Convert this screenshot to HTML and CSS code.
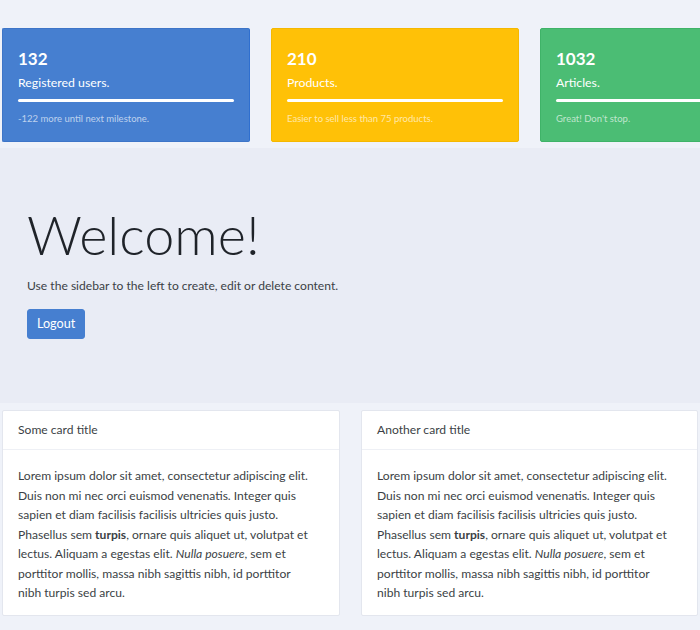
FILE: index.html
```html
<!DOCTYPE html>
<html lang="en">
<head>
<meta charset="utf-8">
<title>Dashboard</title>
<link rel="stylesheet" href="styles.css">
</head>
<body>
<div class="page">
  <div class="stats">
    <div class="stat stat-blue">
      <div class="stat-num">132</div>
      <div class="stat-label">Registered users.</div>
      <div class="stat-bar"></div>
      <div class="stat-note">-122 more until next milestone.</div>
    </div>
    <div class="stat stat-yellow">
      <div class="stat-num">210</div>
      <div class="stat-label">Products.</div>
      <div class="stat-bar"></div>
      <div class="stat-note">Easier to sell less than 75 products.</div>
    </div>
    <div class="stat stat-green">
      <div class="stat-num">1032</div>
      <div class="stat-label">Articles.</div>
      <div class="stat-bar"></div>
      <div class="stat-note">Great! Don't stop.</div>
    </div>
  </div>

  <div class="jumbo">
    <h1 class="jumbo-title">Welcome!</h1>
    <p class="jumbo-lead">Use the sidebar to the left to create, edit or delete content.</p>
    <button class="btn">Logout</button>
  </div>

  <div class="cards">
    <div class="card card-left">
      <div class="card-header">Some card title</div>
      <div class="card-body">Lorem ipsum dolor sit amet, consectetur adipiscing elit. Duis non mi nec orci euismod venenatis. Integer quis sapien et diam facilisis facilisis ultricies quis justo. Phasellus sem <b>turpis</b>, ornare quis aliquet ut, volutpat et lectus. Aliquam a egestas elit. <i>Nulla posuere</i>, sem et porttitor mollis, massa nibh sagittis nibh, id porttitor nibh turpis sed arcu.</div>
    </div>
    <div class="card card-right">
      <div class="card-header">Another card title</div>
      <div class="card-body">Lorem ipsum dolor sit amet, consectetur adipiscing elit. Duis non mi nec orci euismod venenatis. Integer quis sapien et diam facilisis facilisis ultricies quis justo. Phasellus sem <b>turpis</b>, ornare quis aliquet ut, volutpat et lectus. Aliquam a egestas elit. <i>Nulla posuere</i>, sem et porttitor mollis, massa nibh sagittis nibh, id porttitor nibh turpis sed arcu.</div>
    </div>
  </div>
</div>
</body>
</html>
```
FILE: styles.css
```css
html, body {
  margin: 0;
  padding: 0;
}
body {
  background: #eff2f9;
  font-family: Lato, "Open Sans", sans-serif;
  font-size: 12.1px;
  color: #3b3f45;
  overflow: hidden;
  width: 700px;
  height: 630px;
}
.page {
  width: 800px;
}
.stats {
  display: flex;
  gap: 21px;
  padding: 28px 0 0 2px;
}
.stat {
  box-sizing: border-box;
  width: 248px;
  height: 114px;
  padding: 19px 15px 0;
  color: #fff;
  border: 1px solid transparent;
  border-radius: 2px;
}
.stat-blue { background: #467fd0; border-color: #3d75c8; border-right-color: #2f6fcf; }
.stat-yellow { background: #ffc107; border-color: #f5b800; }
.stat-green { background: #4bbd74; border-color: #3fb368; }
.stat-num {
  font-size: 17px;
  font-weight: 700;
  line-height: 22px;
}
.stat-label {
  margin-top: 3px;
  font-size: 12.3px;
  line-height: 20px;
}
.stat-bar {
  margin-top: 6px;
  height: 3px;
  background: #fff;
  border-radius: 2px;
}
.stat-note {
  margin-top: 10px;
  font-size: 9.5px;
  line-height: 14px;
  color: rgba(255, 255, 255, 0.65);
}
.jumbo {
  box-sizing: border-box;
  margin-top: 6px;
  width: 700px;
  height: 255px;
  padding: 55px 27px 0;
  background: #e9ecf5;
}
.jumbo-title {
  margin: 0;
  font-size: 54px;
  font-weight: 300;
  line-height: 1.2;
  color: #1f2329;
}
.jumbo-lead {
  margin: 8px 0 0;
  line-height: 20px;
}
.btn {
  margin-top: 13px;
  height: 30px;
  padding: 0 9px;
  border: 1px solid #467fd0;
  border-radius: 3px;
  background: #467fd0;
  color: #fff;
  font-family: inherit;
  font-size: 12.6px;
}
.cards {
  display: flex;
  gap: 21px;
  padding: 7px 0 0 2px;
}
.card {
  box-sizing: border-box;
  height: 206px;
  background: #fff;
  border: 1px solid #e3e6ee;
  border-radius: 2px;
}
.card-left { width: 338px; }
.card-right { width: 337px; }
.card-header {
  box-sizing: border-box;
  height: 39px;
  padding: 0 15px;
  line-height: 38px;
  border-bottom: 1px solid #eef0f5;
}
.card-body {
  padding: 16px 26px 16px 15px;
  line-height: 19.5px;
}
```
